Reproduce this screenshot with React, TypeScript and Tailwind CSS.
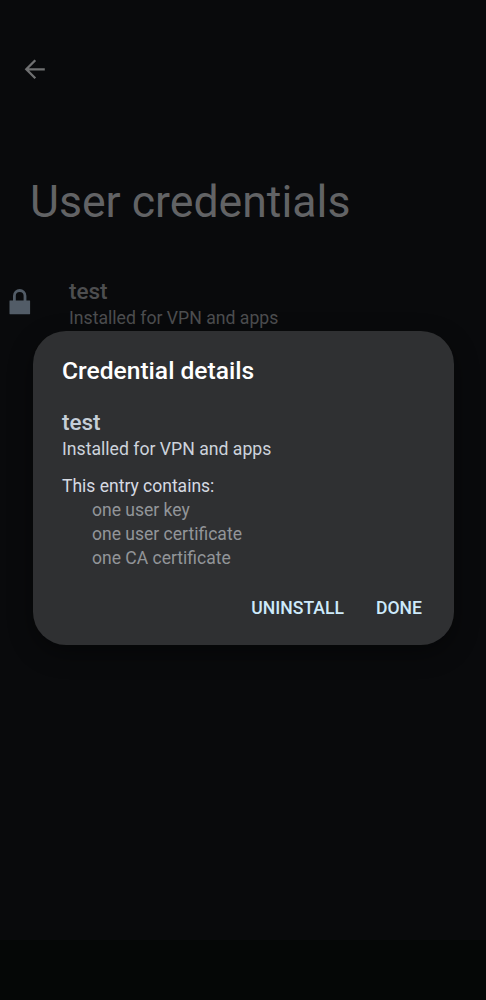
export default function App() {
  return (
    <div className="relative flex h-[1000px] w-[486px] flex-col overflow-hidden bg-[#090a0c] font-['Roboto',sans-serif]">
      <header className="pt-[57px] pl-[23px]">
        <button aria-label="Back" className="block">
          <svg width="24" height="24" viewBox="0 0 24 24" fill="none" stroke="#6f7071" strokeWidth="2.3">
            <path d="M12.3 3.3 3.3 12.3l9 9M3.3 12.3h18.5" />
          </svg>
        </button>
      </header>
      <main className="flex-1">
        <h1 className="mt-[91px] ml-[30px] text-[44.6px] leading-[60px] whitespace-nowrap text-[#626365]">User credentials</h1>
        <div className="mt-[45px] flex">
          <div className="w-[69px] pt-[12px] pl-[9px]">
            <svg width="22" height="27" viewBox="0 0 22 27">
              <path d="M5.4 13V6.8a5.2 5.2 0 0 1 10.6 0V13" fill="none" stroke="#525c67" strokeWidth="2.8" />
              <rect x="0.5" y="11.4" width="20.6" height="13.8" rx="0.4" fill="#525c67" />
            </svg>
          </div>
          <div>
            <div className="text-[22.5px] leading-[28px] font-medium text-[#4d4e50]">test</div>
            <div className="mt-px text-[17.65px] leading-[24px] text-[#4d4e50]">Installed for VPN and apps</div>
          </div>
        </div>
      </main>
      <nav className="h-[60px] bg-[#050706]" />
      <section role="dialog" className="absolute top-[330.5px] left-[32.5px] flex h-[314.5px] w-[421px] flex-col rounded-[33px] bg-[#2f3032] pl-[29.5px] shadow-[0_8px_24px_#00000066]">
        <h2 className="mt-[24.5px] text-[24.6px] leading-[32px] font-medium text-white">Credential details</h2>
        <div className="mt-[21px] text-[22.5px] leading-[28px] font-medium text-[#c5ced8]">test</div>
        <div className="mt-px text-[17.65px] leading-[25px] text-[#cdd3dc]">Installed for VPN and apps</div>
        <div className="mt-[12px] text-[17.5px] leading-[24px] text-[#d6dae2]">This entry contains:</div>
        <ul className="pl-[30px] text-[17.55px] leading-[24px] text-[#929599]">
          <li>one user key</li>
          <li>one user certificate</li>
          <li>one CA certificate</li>
        </ul>
        <div className="mt-[26px] flex justify-end gap-[32px] pr-[31.5px] text-[17.6px] leading-[24px] font-medium text-[#cdeafb]">
          <button>UNINSTALL</button>
          <button>DONE</button>
        </div>
      </section>
    </div>
  );
}
